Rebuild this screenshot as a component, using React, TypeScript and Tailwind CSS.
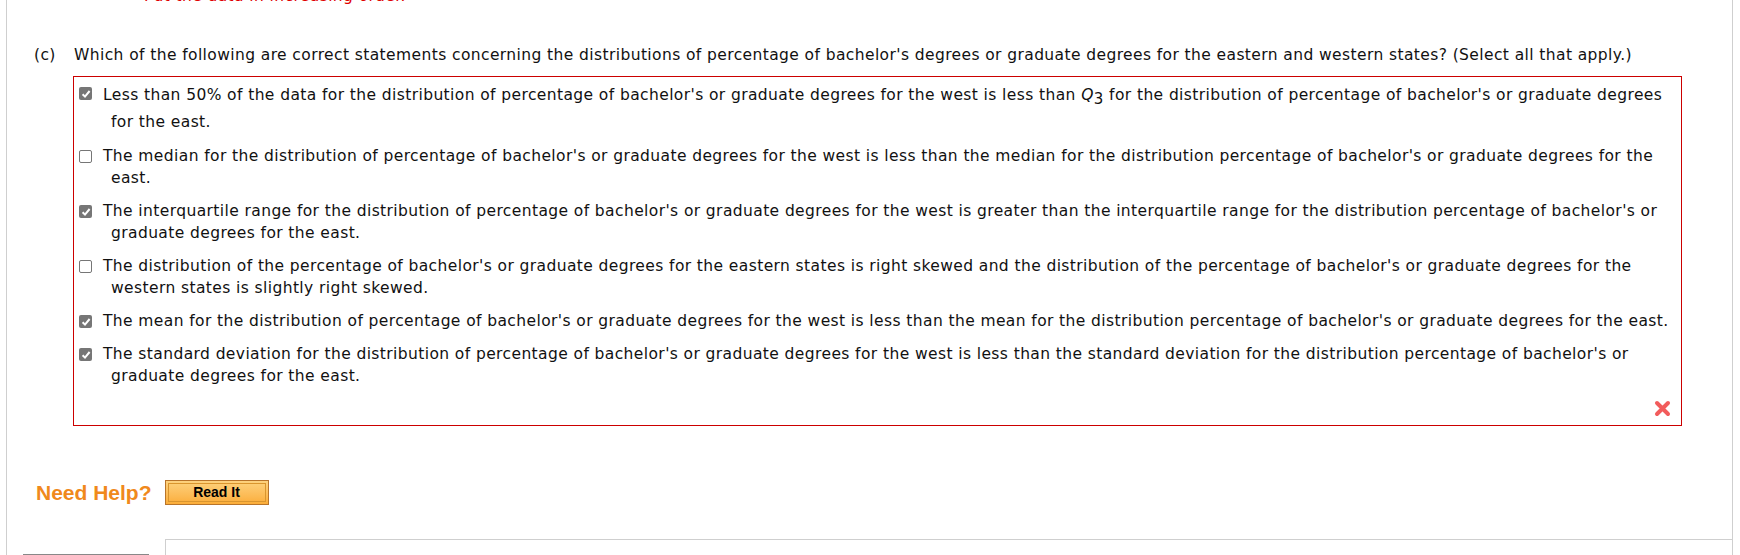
import React from "react";

type Choice = { checked: boolean; text: React.ReactNode; first?: boolean };

function Box({ checked }: { checked: boolean }) {
  if (checked) {
    return (
      <span className="mt-[5px] inline-flex h-[13px] w-[13px] shrink-0 items-center justify-center rounded-[2px] bg-[#767676]">
        <svg width="10" height="10" viewBox="0 0 10 10">
          <path d="M1.6 5.2 L4 7.6 L8.6 2" fill="none" stroke="#fff" strokeWidth="2" />
        </svg>
      </span>
    );
  }
  return <span className="mt-[5px] inline-block h-[13px] w-[13px] shrink-0 rounded-[2px] border border-[#767676] bg-white" />;
}

const choices: Choice[] = [
  {
    checked: true,
    first: true,
    text: (
      <>
        Less than 50% of the data for the distribution of percentage of bachelor's or graduate degrees for the west is less than{" "}
        <i className="font-['DejaVu_Sans']">Q</i>
        <sub className="text-[15px]">3</sub> for the distribution of percentage of bachelor's or graduate degrees for the east.
      </>
    ),
  },
  {
    checked: false,
    text: "The median for the distribution of percentage of bachelor's or graduate degrees for the west is less than the median for the distribution percentage of bachelor's or graduate degrees for the east.",
  },
  {
    checked: true,
    text: "The interquartile range for the distribution of percentage of bachelor's or graduate degrees for the west is greater than the interquartile range for the distribution percentage of bachelor's or graduate degrees for the east.",
  },
  {
    checked: false,
    text: "The distribution of the percentage of bachelor's or graduate degrees for the eastern states is right skewed and the distribution of the percentage of bachelor's or graduate degrees for the western states is slightly right skewed.",
  },
  {
    checked: true,
    text: "The mean for the distribution of percentage of bachelor's or graduate degrees for the west is less than the mean for the distribution percentage of bachelor's or graduate degrees for the east.",
  },
  {
    checked: true,
    text: "The standard deviation for the distribution of percentage of bachelor's or graduate degrees for the west is less than the standard deviation for the distribution percentage of bachelor's or graduate degrees for the east.",
  },
];

export default function App() {
  return (
    <div className="h-[555px] overflow-hidden bg-white font-['DejaVu_Sans',sans-serif] text-[15.5px] tracking-[0.4px] text-[#111]">
      <div className="ml-[6px] h-[600px] w-[1727px] border-x border-[#cfcfcf]">
        {/* previous part, cut off at the top */}
        <div className="-mt-[15px] pl-[137px] leading-[22px] text-[#e00000]">Put the data in increasing order.</div>

        <div className="mt-[37px] flex leading-[22px]">
          <span className="w-[67px] pl-[27px]">(c)</span>
          <span>
            Which of the following are correct statements concerning the distributions of percentage of bachelor's degrees or graduate degrees for the eastern and western states? (Select all that apply.)
          </span>
        </div>

        <div className="ml-[66px] mt-[10px] w-[1609px] border border-[#cc0000] px-[5px] pt-[5px] pb-[8px]">
          <div className="flex flex-col">
            {choices.map((c, i) => (
              <div
                key={i}
                className={
                  "flex gap-[11px] " +
                  (c.first ? "leading-[27px]" : "leading-[22px]") +
                  (i === 0 ? "" : i === 1 ? " mt-[9px]" : " mt-[11px]")
                }
              >
                <Box checked={c.checked} />
                <span className="-indent-2 pl-2">{c.text}</span>
              </div>
            ))}
          </div>
          <div className="mt-[13px] flex justify-end pr-[5px]">
            <svg width="17" height="17" viewBox="0 0 17 17">
              <path d="M3 3 L14 14 M14 3 L3 14" stroke="#f25c5c" strokeWidth="4" strokeLinecap="round" />
            </svg>
          </div>
        </div>

        <div className="mt-[51px] flex items-center gap-[13px] pl-[29px]">
          <span className="font-['Liberation_Sans',sans-serif] text-[21px] font-bold tracking-normal text-[#f0891c]">Need Help?</span>
          <button className="h-[25px] w-[104px] border border-[#b8742a] bg-gradient-to-b from-[#fdd27d] to-[#fbad38] p-[2px]">
            <span className="flex h-full w-full items-center justify-center border border-[#d9952e] font-['Liberation_Sans',sans-serif] text-[14px] font-bold tracking-normal text-black">
              Read It
            </span>
          </button>
        </div>

        <div className="mt-[30px] flex">
          <div className="mt-[15px] ml-[16px] h-[20px] w-[126px] border-t-2 border-[#888] bg-[#f2f2f2]" />
          <div className="ml-[16px] h-[40px] flex-1 border-l border-t border-[#cfcfcf]" />
        </div>
      </div>
    </div>
  );
}
